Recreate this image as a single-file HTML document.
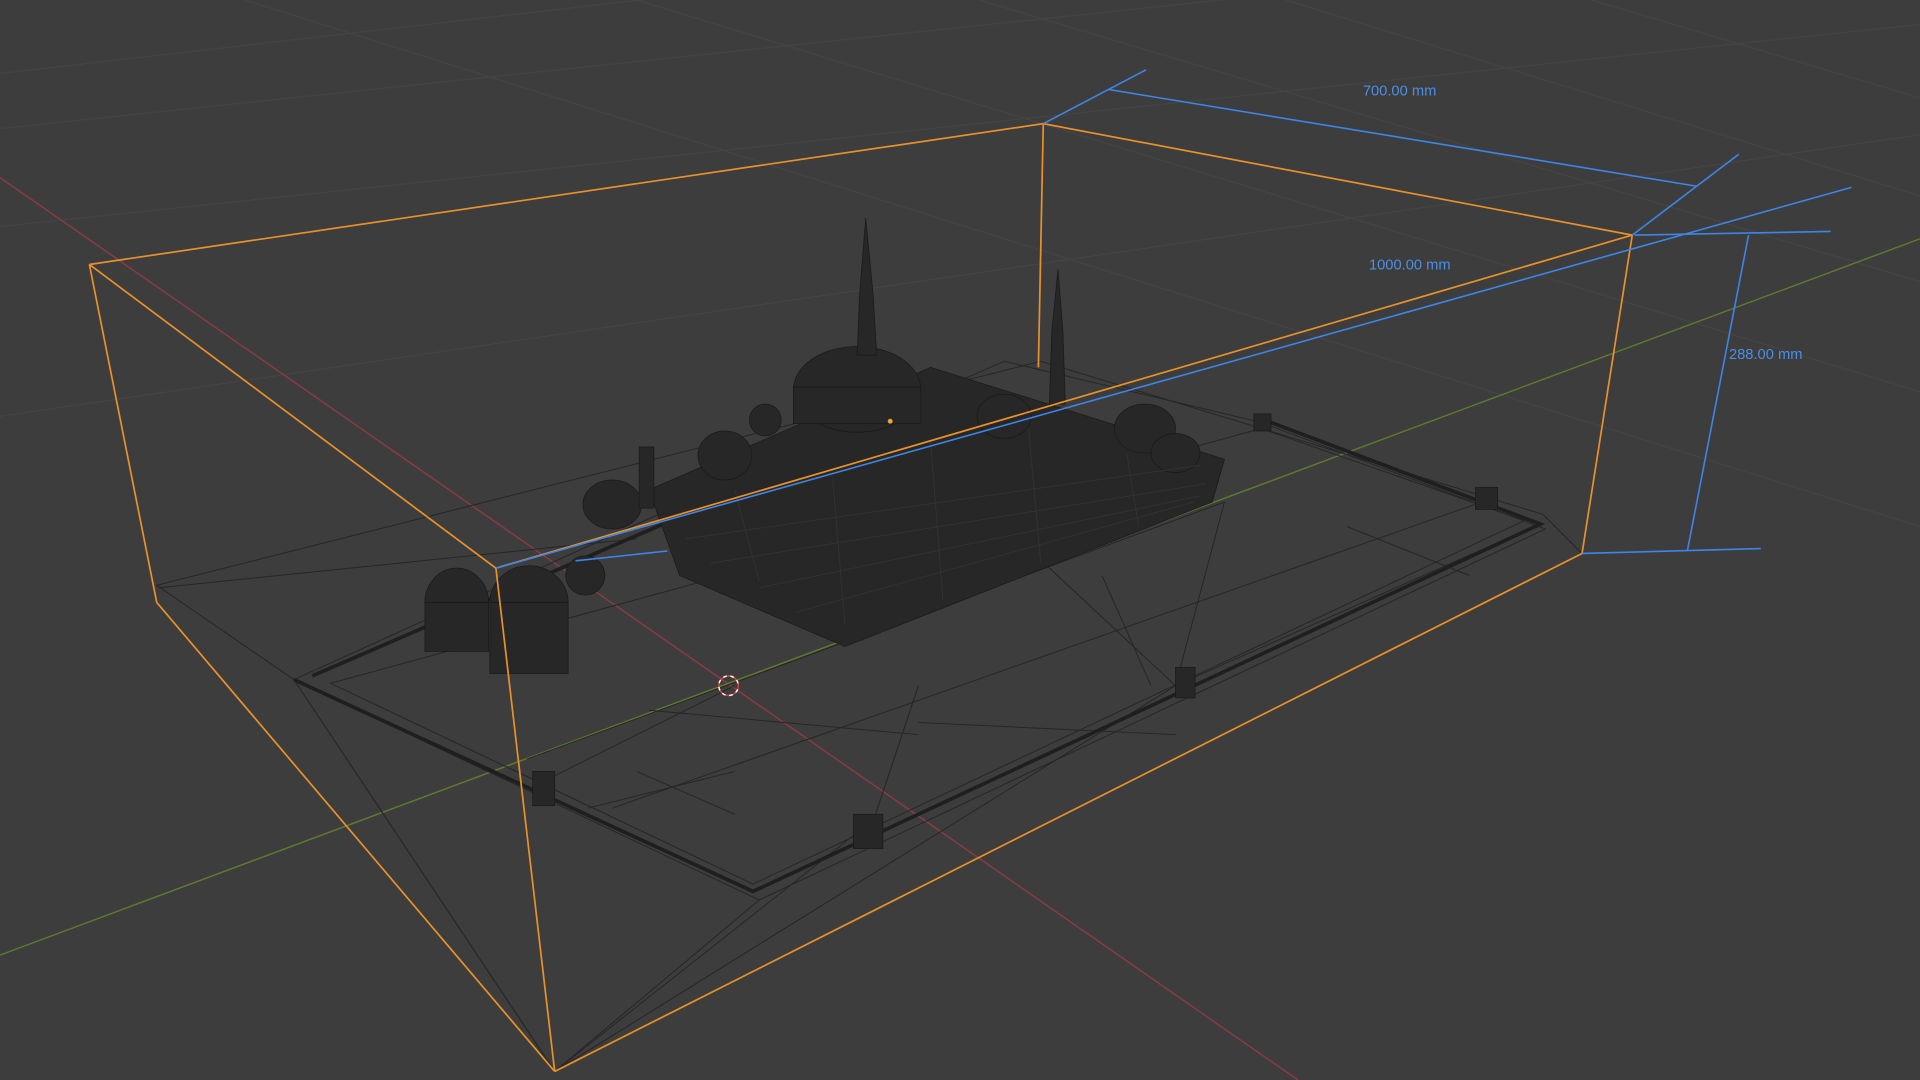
<!DOCTYPE html>
<html><head><meta charset="utf-8"><style>
html,body{margin:0;padding:0;background:#3d3d3d;overflow:hidden}
svg{display:block}
text{font-family:"Liberation Sans",sans-serif;font-size:12px;fill:#4a8fe8}
</style></head><body>
<svg width="1920" height="1080" viewBox="0 0 1568 882" preserveAspectRatio="none">
<rect width="1568" height="882" fill="#3d3d3d"/>
<g stroke="#444444" stroke-width="1" fill="none">
<line x1="0" y1="60" x2="1568" y2="-120"/>
<line x1="0" y1="105" x2="1568" y2="-60"/>
<line x1="0" y1="185" x2="1568" y2="20"/>
<line x1="0" y1="340" x2="1568" y2="110"/>
<line x1="200" y1="0" x2="1568" y2="430"/>
<line x1="520" y1="0" x2="1568" y2="320"/>
<line x1="800" y1="0" x2="1568" y2="230"/>
<line x1="1050" y1="0" x2="1568" y2="160"/>
<line x1="1300" y1="0" x2="1568" y2="80"/>
</g>
<line x1="0" y1="145" x2="1060" y2="882" stroke="#8a3b42" stroke-width="1.2"/>
<line x1="0" y1="780" x2="1568" y2="195" stroke="#5d7a2e" stroke-width="1.2"/>
<g stroke="#262626" stroke-width="0.8" fill="none">
<polygon points="128,478 240,555 453,875 1292,452 1260,420 850,295"/>
<polygon points="240,555 620,735 1262,432 1030,345 820,295 560,410"/>
<polygon points="270,558 615,722 1245,425 1030,350"/>
<line x1="240" y1="555" x2="453" y2="875"/>
<line x1="620" y1="735" x2="453" y2="875"/>
<line x1="960" y1="560" x2="810" y2="420"/>
<line x1="960" y1="560" x2="1000" y2="410"/>
<line x1="710" y1="680" x2="750" y2="560"/>
<line x1="440" y1="640" x2="600" y2="560"/>
<line x1="430" y1="620" x2="1000" y2="410"/>
<line x1="500" y1="660" x2="1210" y2="410"/>
<line x1="130" y1="480" x2="520" y2="440"/>
<line x1="700" y1="680" x2="453" y2="875"/>
<line x1="960" y1="560" x2="453" y2="875"/>
<line x1="1230" y1="440" x2="960" y2="560"/>
<line x1="480" y1="660" x2="600" y2="630"/>
<line x1="520" y1="630" x2="600" y2="665"/>
<line x1="750" y1="590" x2="960" y2="600"/>
<line x1="530" y1="580" x2="750" y2="600"/>
<line x1="900" y1="470" x2="940" y2="560"/>
<line x1="1100" y1="430" x2="1200" y2="470"/>
</g>
<g stroke="#1f1f1f" stroke-width="3" fill="none">
<polyline points="240,555 615,728 1258,428 1030,342"/>
<polyline points="255,552 560,420"/>
</g>
<g fill="#272727" stroke="#1a1a1a" stroke-width="0.6">
<polygon points="530,400 760,300 1000,375 990,410 690,528 555,470"/>
<ellipse cx="700" cy="318" rx="52" ry="35"/>
<rect x="648" y="316" width="104" height="30"/>
<ellipse cx="592" cy="372" rx="22" ry="20"/>
<ellipse cx="625" cy="343" rx="13" ry="13"/>
<ellipse cx="500" cy="412" rx="24" ry="20"/>
<ellipse cx="935" cy="350" rx="25" ry="20"/>
<ellipse cx="960" cy="370" rx="20" ry="16"/>
<ellipse cx="820" cy="340" rx="22" ry="18"/>
<polygon points="707,178 702,240 700,290 716,290 713,240"/>
<polygon points="864,220 859,270 857,330 870,330 868,270"/>
<rect x="522" y="365" width="12" height="50"/>
<ellipse cx="373" cy="492" rx="26" ry="28"/>
<rect x="347" y="492" width="52" height="40"/>
<ellipse cx="432" cy="492" rx="32" ry="30"/>
<rect x="400" y="492" width="64" height="58"/>
<ellipse cx="478" cy="470" rx="16" ry="16"/>
<rect x="960" y="545" width="16" height="25"/>
<rect x="697" y="665" width="24" height="28"/>
<rect x="435" y="630" width="18" height="28"/>
<rect x="1205" y="398" width="18" height="18"/>
<rect x="1024" y="338" width="14" height="14"/>
</g>
<g stroke="#333" stroke-width="0.7" fill="none">
<line x1="560" y1="440" x2="980" y2="380"/>
<line x1="580" y1="460" x2="985" y2="395"/>
<line x1="620" y1="480" x2="980" y2="405"/>
<line x1="650" y1="500" x2="975" y2="410"/>
<line x1="600" y1="400" x2="620" y2="475"/>
<line x1="680" y1="390" x2="690" y2="510"/>
<line x1="760" y1="360" x2="770" y2="490"/>
<line x1="840" y1="350" x2="850" y2="460"/>
<line x1="920" y1="370" x2="930" y2="430"/>
</g>
<circle cx="727" cy="344" r="2" fill="#f0a030"/>
<g stroke="#e8912a" stroke-width="1.4" fill="none">
<polyline points="73,216 852,101 1333,192 405,464 73,216"/>
<line x1="73" y1="216" x2="128" y2="492"/>
<line x1="405" y1="464" x2="453" y2="875"/>
<line x1="1333" y1="192" x2="1292" y2="452"/>
<line x1="852" y1="101" x2="848" y2="300"/>
<line x1="128" y1="492" x2="453" y2="875"/>
<line x1="453" y1="875" x2="1292" y2="452"/>
</g>
<g stroke="#3d86e8" stroke-width="1.3" fill="none">
<line x1="852" y1="101" x2="936" y2="57"/>
<line x1="1333" y1="192" x2="1420" y2="126"/>
<line x1="905" y1="73" x2="1385" y2="152"/>
<line x1="405" y1="464" x2="1512" y2="153"/>
<line x1="470" y1="458" x2="545" y2="450"/>
<line x1="1335" y1="192" x2="1495" y2="189"/>
<line x1="1292" y1="452" x2="1438" y2="448"/>
<line x1="1428" y1="192" x2="1378" y2="450"/>
</g>
<text x="1113" y="78">700.00 mm</text>
<text x="1118" y="220">1000.00 mm</text>
<text x="1412" y="293">288.00 mm</text>
<circle cx="595" cy="560" r="8" fill="none" stroke="#e04040" stroke-width="1.2" stroke-dasharray="3,3"/>
<circle cx="595" cy="560" r="8" fill="none" stroke="#ffffff" stroke-width="1.2" stroke-dasharray="3,3" stroke-dashoffset="3"/>
</svg>
</body></html>
